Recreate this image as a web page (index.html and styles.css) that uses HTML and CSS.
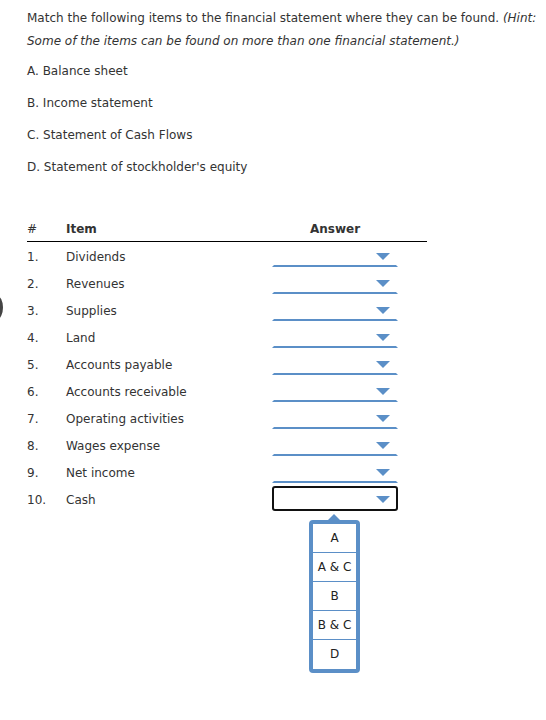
FILE: index.html
```html
<!DOCTYPE html>
<html>
<head>
<meta charset="utf-8">
<link rel="stylesheet" href="styles.css">
</head>
<body>
<div class="edge-mark"></div>
<div class="content">
  <p class="intro">Match the following items to the financial statement where they can be found. <em>(Hint:</em> <em>Some of the items can be found on more than one financial statement.)</em></p>
  <div class="options">
    <div class="opt">A. Balance sheet</div>
    <div class="opt">B. Income statement</div>
    <div class="opt">C. Statement of Cash Flows</div>
    <div class="opt">D. Statement of stockholder's equity</div>
  </div>
  <div class="table">
    <div class="row head">
      <div class="c-num">#</div>
      <div class="c-item bold">Item</div>
      <div class="c-ans bold"><span class="ans-label">Answer</span></div>
    </div>
    <div class="row"><div class="c-num">1.</div><div class="c-item">Dividends</div><div class="c-ans"><div class="sel"><span class="tri"></span></div></div></div>
    <div class="row"><div class="c-num">2.</div><div class="c-item">Revenues</div><div class="c-ans"><div class="sel"><span class="tri"></span></div></div></div>
    <div class="row"><div class="c-num">3.</div><div class="c-item">Supplies</div><div class="c-ans"><div class="sel"><span class="tri"></span></div></div></div>
    <div class="row"><div class="c-num">4.</div><div class="c-item">Land</div><div class="c-ans"><div class="sel"><span class="tri"></span></div></div></div>
    <div class="row"><div class="c-num">5.</div><div class="c-item">Accounts payable</div><div class="c-ans"><div class="sel"><span class="tri"></span></div></div></div>
    <div class="row"><div class="c-num">6.</div><div class="c-item">Accounts receivable</div><div class="c-ans"><div class="sel"><span class="tri"></span></div></div></div>
    <div class="row"><div class="c-num">7.</div><div class="c-item">Operating activities</div><div class="c-ans"><div class="sel"><span class="tri"></span></div></div></div>
    <div class="row"><div class="c-num">8.</div><div class="c-item">Wages expense</div><div class="c-ans"><div class="sel"><span class="tri"></span></div></div></div>
    <div class="row"><div class="c-num">9.</div><div class="c-item">Net income</div><div class="c-ans"><div class="sel"><span class="tri"></span></div></div></div>
    <div class="row"><div class="c-num">10.</div><div class="c-item">Cash</div><div class="c-ans"><div class="sel open"><span class="tri"></span>
      <div class="menu">
        <span class="caret"></span>
        <div class="mi">A</div>
        <div class="mi">A &amp; C</div>
        <div class="mi">B</div>
        <div class="mi">B &amp; C</div>
        <div class="mi">D</div>
      </div>
    </div></div></div>
  </div>
</div>
</body>
</html>
```

FILE: styles.css
```css
html, body {
  margin: 0;
  padding: 0;
  background: #fff;
}
body {
  font-family: "DejaVu Sans", Verdana, sans-serif;
  font-size: 12px;
  color: #333;
  width: 546px;
  height: 720px;
  overflow: hidden;
  position: relative;
}
.edge-mark {
  position: absolute;
  left: -9px;
  top: 296px;
  width: 12px;
  height: 23px;
  border-radius: 50%;
  background: #444;
}
.content {
  padding: 7px 0 0 27px;
}
.intro {
  margin: 0;
  line-height: 23px;
  width: 530px;
}
.intro em {
  font-style: italic;
}
.options {
  margin-top: 2px;
}
.opt {
  height: 32px;
  line-height: 32px;
}
.table {
  margin-top: 33px;
  width: 400px;
}
.row {
  display: flex;
  height: 27px;
  line-height: 27px;
}
.row.head {
  height: 25px;
  line-height: 27px;
  border-bottom: 1px solid #000;
}
.row .c-num,
.row .c-item {
  padding-top: 2px;
}
.row.head .c-num,
.row.head .c-item {
  padding-top: 0;
}
.bold {
  font-weight: bold;
}
.c-num {
  width: 39px;
}
.c-item {
  width: 206px;
}
.c-ans {
  width: 155px;
}
.ans-label {
  display: block;
  width: 126px;
  text-align: center;
}
.sel {
  position: relative;
  margin-top: 1px;
  width: 126px;
  height: 24px;
  box-sizing: border-box;
  border: 2px solid transparent;
  border-bottom-color: #5b8fc7;
}
.sel.open {
  border: 2px solid #111;
  border-radius: 3px;
  height: 25px;
}
.tri {
  position: absolute;
  right: 6px;
  top: 8px;
  width: 0;
  height: 0;
  border-left: 7px solid transparent;
  border-right: 7px solid transparent;
  border-top: 7px solid #5b8fc7;
}
.menu {
  position: absolute;
  left: 35px;
  top: 32px;
  width: 51px;
  box-sizing: border-box;
  border: 4px solid #5b8fc7;
  border-radius: 4px;
  background: #fff;
  z-index: 2;
}
.caret {
  position: absolute;
  left: 15px;
  top: -10px;
  width: 0;
  height: 0;
  border-left: 6px solid transparent;
  border-right: 6px solid transparent;
  border-bottom: 6px solid #5b8fc7;
}
.mi {
  height: 28px;
  line-height: 29px;
  text-align: center;
  color: #222;
  border-top: 1px solid #5b8fc7;
}
.mi:first-of-type {
  border-top: none;
}
.mi:last-of-type {
  height: 29px;
}
```
